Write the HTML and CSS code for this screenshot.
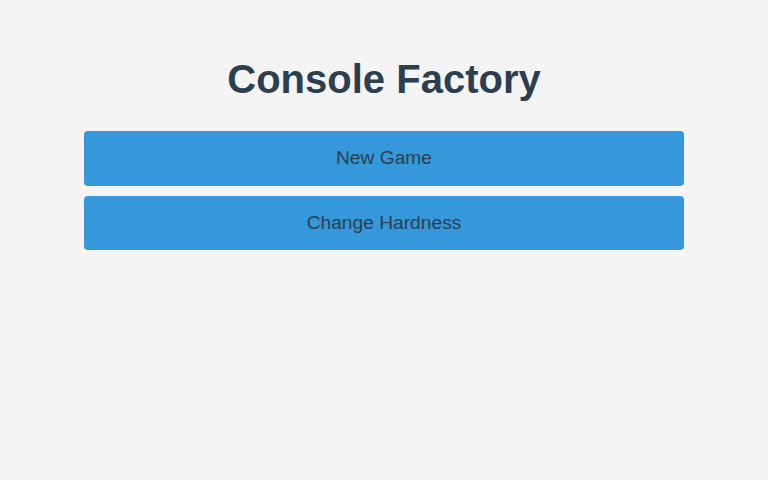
FILE: index.html
```html
<!DOCTYPE html>
<html lang="en">
<head>
    <meta charset="UTF-8">
    <meta name="viewport" content="width=device-width, initial-scale=1.0">
    <title>Console Factory</title>
    <link rel="stylesheet" href="styles.css">
</head>
<body>
    <div class="menu">
        <h1 class="title">Console Factory</h1>
        <button class="menu-btn" id="new-game">New Game</button>
        <button class="menu-btn" id="change-hardness">Change Hardness</button>
    </div>
</body>
</html>
```

FILE: styles.css
```css
body {
    font-family: 'Liberation Sans', Arial, sans-serif;
    margin: 0;
    padding: 57px 20px 20px;
    background-color: #f4f4f4;
    color: #2c3e50;
}

.menu {
    max-width: 600px;
    margin: 0 auto;
    display: flex;
    flex-direction: column;
    gap: 10px;
}

.title {
    font-size: 40px;
    font-weight: bold;
    text-align: center;
    margin: 0 0 19px;
}

.menu-btn {
    height: 54.5px;
    font-family: inherit;
    font-size: 19.2px;
    color: #2c3e50;
    background-color: #3498db;
    border: none;
    border-radius: 4px;
    cursor: pointer;
}
```
